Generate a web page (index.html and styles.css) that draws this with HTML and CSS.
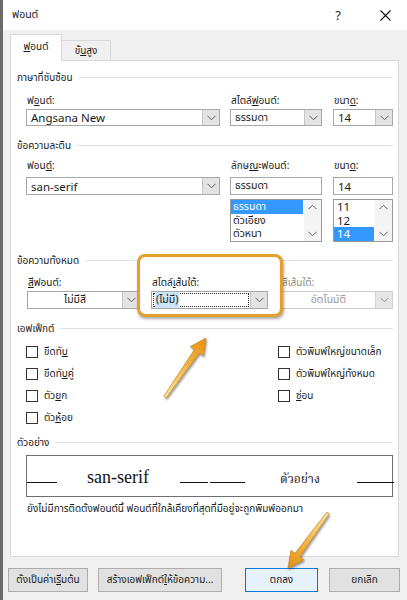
FILE: index.html
```html
<!DOCTYPE html>
<html lang="th">
<head>
<meta charset="utf-8">
<title>ฟอนต์</title>
<link rel="stylesheet" href="styles.css">
</head>
<body>
<div class="dialog">
  <header class="titlebar">
    <span class="title">ฟอนต์</span>
    <span class="help">?</span>
    <span class="close"><svg width="11" height="11" viewBox="0 0 11 11"><path d="M0.5 0.5L10.5 10.5M10.5 0.5L0.5 10.5" stroke="#111" stroke-width="1.1" fill="none"/></svg></span>
  </header>

  <nav class="tabs">
    <div class="tab tab-active"><u>ฟ</u>อนต์</div>
    <div class="tab tab-idle">ขั้<u>น</u>สูง</div>
  </nav>

  <main class="panel">
    <div class="group-head head-1"><span>ภาษาที่ซับซ้อน</span><i class="rule"></i></div>
    <div class="row">
      <div class="field w-font">
        <div class="label l-1">ฟ<u>อ</u>นต์:</div>
        <div class="combo c-1"><span class="combo-text">Angsana New</span><span class="combo-btn"><svg width="9" height="6" viewBox="0 0 9 6"><path d="M0.5 0.8L4.5 4.8L8.5 0.8" stroke="#606060" fill="none"/></svg></span></div>
      </div>
      <div class="field w-style">
        <div class="label l-1">สไตล์<u>ฟ</u>อนต์:</div>
        <div class="combo c-1"><span class="combo-text thai">ธรรมดา</span><span class="combo-btn"><svg width="9" height="6" viewBox="0 0 9 6"><path d="M0.5 0.8L4.5 4.8L8.5 0.8" stroke="#606060" fill="none"/></svg></span></div>
      </div>
      <div class="field w-size">
        <div class="label l-1">ขนา<u>ด</u>:</div>
        <div class="combo c-1"><span class="combo-text">14</span><span class="combo-btn"><svg width="9" height="6" viewBox="0 0 9 6"><path d="M0.5 0.8L4.5 4.8L8.5 0.8" stroke="#606060" fill="none"/></svg></span></div>
      </div>
    </div>

    <div class="group-head head-2"><span>ข้อความละติน</span><i class="rule"></i></div>
    <div class="row">
      <div class="field w-font">
        <div class="label l-2">ฟอน<u>ต์</u>:</div>
        <div class="combo c-2"><span class="combo-text">san-serif</span><span class="combo-btn"><svg width="9" height="6" viewBox="0 0 9 6"><path d="M0.5 0.8L4.5 4.8L8.5 0.8" stroke="#606060" fill="none"/></svg></span></div>
      </div>
      <div class="field w-style">
        <div class="label l-2">ลักษ<u>ณ</u>ะฟอนต์:</div>
        <div class="textbox c-2"><span class="combo-text thai">ธรรมดา</span></div>
        <div class="listbox">
          <ul class="items">
            <li class="sel">ธรรมดา</li>
            <li>ตัวเอียง</li>
            <li>ตัวหนา</li>
          </ul>
          <div class="vscroll">
            <svg width="9" height="6" viewBox="0 0 9 6"><path d="M0.5 5.2L4.5 1.2L8.5 5.2" stroke="#606060" fill="none"/></svg>
            <svg width="9" height="6" viewBox="0 0 9 6"><path d="M0.5 0.8L4.5 4.8L8.5 0.8" stroke="#606060" fill="none"/></svg>
          </div>
        </div>
      </div>
      <div class="field w-size">
        <div class="label l-2">ขนา<u>ด</u>:</div>
        <div class="textbox c-2"><span class="combo-text">14</span></div>
        <div class="listbox">
          <ul class="items items-num">
            <li>11</li>
            <li>12</li>
            <li class="sel">14</li>
          </ul>
          <div class="vscroll">
            <svg width="9" height="6" viewBox="0 0 9 6"><path d="M0.5 5.2L4.5 1.2L8.5 5.2" stroke="#606060" fill="none"/></svg>
            <svg width="9" height="6" viewBox="0 0 9 6"><path d="M0.5 0.8L4.5 4.8L8.5 0.8" stroke="#606060" fill="none"/></svg>
          </div>
        </div>
      </div>
    </div>

    <div class="group-head head-3"><span>ข้อความทั้งหมด</span><i class="rule"></i></div>
    <div class="row row-3">
      <div class="field w-color">
        <div class="label l-3"><u>สี</u>ฟอนต์:</div>
        <div class="combo c-3"><span class="combo-text centered">ไม่มีสี</span><span class="combo-btn"><svg width="9" height="6" viewBox="0 0 9 6"><path d="M0.5 0.8L4.5 4.8L8.5 0.8" stroke="#606060" fill="none"/></svg></span></div>
      </div>
      <div class="field w-uline">
        <div class="highlight"></div>
        <div class="label l-3">สไตล์<u>เ</u>ส้นใต้:</div>
        <div class="combo c-3"><span class="combo-text focus-text"><span class="selected"><span class="sel-word">(ไม่มี)</span></span></span><span class="combo-btn"><svg width="9" height="6" viewBox="0 0 9 6"><path d="M0.5 0.8L4.5 4.8L8.5 0.8" stroke="#606060" fill="none"/></svg></span></div>
      </div>
      <div class="field w-ucolor">
        <div class="label l-3 disabled">สีเส้นใต้:</div>
        <div class="combo c-3 combo-disabled"><span class="combo-text centered">อัตโนมัติ</span><span class="combo-btn"><svg width="9" height="6" viewBox="0 0 9 6"><path d="M0.5 0.8L4.5 4.8L8.5 0.8" stroke="#8a8a8a" fill="none"/></svg></span></div>
      </div>
    </div>

    <div class="group-head head-4"><span>เอฟเฟ็กต์</span><i class="rule"></i></div>
    <div class="checks">
      <label class="check"><span class="box"></span><span>ขีดทั<u>บ</u></span></label>
      <label class="check"><span class="box"></span><span>ตัวพิมพ์ใหญ่ขนาดเล็ก</span></label>
      <label class="check"><span class="box"></span><span>ขีดทั<u>บ</u>คู่</span></label>
      <label class="check"><span class="box"></span><span>ตัวพิมพ์ใหญ่ทั้งหมด</span></label>
      <label class="check"><span class="box"></span><span>ตัว<u>ย</u>ก</span></label>
      <label class="check"><span class="box"></span><span><u>ซ่</u>อน</span></label>
      <label class="check"><span class="box"></span><span>ตัว<u>ห้</u>อย</span></label>
    </div>

    <div class="group-head head-5"><span>ตัวอย่าง</span><i class="rule"></i></div>
    <div class="preview">
      <span class="uline ul-a"></span>
      <span class="pv-latin">san-serif</span>
      <span class="uline ul-b"></span>
      <span class="uline ul-c"></span>
      <span class="pv-thai">ตัวอย่าง</span>
      <span class="uline ul-d"></span>
    </div>
    <p class="note">ยังไม่มีการติดตั้งฟอนต์นี้ ฟอนต์ที่ใกล้เคียงที่สุดที่มีอยู่จะถูกพิมพ์ออกมา</p>
  </main>

  <footer class="buttons">
    <button class="btn b-default">ตั้งเป็นค่าเ<u>ริ่</u>มต้น</button>
    <button class="btn b-effects">สร้างเอฟเฟ็กต์<u>ใ</u>ห้ข้อความ...</button>
    <button class="btn b-ok">ตกลง</button>
    <button class="btn b-cancel">ยกเลิก</button>
  </footer>

  <svg class="callouts" width="407" height="600" viewBox="0 0 407 600">
    <defs>
      <linearGradient id="g1" x1="165" y1="397" x2="206" y2="338" gradientUnits="userSpaceOnUse">
        <stop offset="0" stop-color="#fbe3a0"/>
        <stop offset="0.6" stop-color="#f0b040"/>
        <stop offset="1" stop-color="#e8910f"/>
      </linearGradient>
      <linearGradient id="g2" x1="328" y1="513" x2="288" y2="568" gradientUnits="userSpaceOnUse">
        <stop offset="0" stop-color="#fbe3a0"/>
        <stop offset="0.6" stop-color="#f0b040"/>
        <stop offset="1" stop-color="#e8910f"/>
      </linearGradient>
      <filter id="sh" x="-30%" y="-30%" width="160%" height="160%">
        <feDropShadow dx="1" dy="1.5" stdDeviation="1.2" flood-color="#000" flood-opacity="0.45"/>
      </filter>
    </defs>
    <polygon filter="url(#sh)" fill="url(#g1)" stroke="#c07810" stroke-width="0.6"
      points="206,338 203.4,355.7 199.4,352.9 166.2,397.9 163.8,396.1 194.4,349.5 190.3,346.6"/>
    <polygon filter="url(#sh)" fill="url(#g2)" stroke="#c07810" stroke-width="0.6"
      points="288,568 303.9,559.8 299.8,556.9 329.2,513.9 326.8,512.1 295,553.3 290.9,550.4"/>
  </svg>
</div>
</body>
</html>
```

FILE: styles.css
```css
* { box-sizing: border-box; }

html, body {
  margin: 0;
  padding: 0;
}

body {
  width: 407px;
  height: 600px;
  overflow: hidden;
  background: #f0f0f0;
  font-family: "Noto Sans", "Noto Sans Thai", Tahoma, "DejaVu Sans", sans-serif;
  font-size: 10px;
  color: #1a1a1a;
}

.dialog {
  position: relative;
  width: 407px;
  height: 600px;
  border-left: 3px solid #6a6a6a;
  background: #f0f0f0;
}

u { text-decoration: underline; text-underline-offset: 1px; }

/* title bar */
.titlebar {
  height: 30px;
  background: #fff;
  display: flex;
  align-items: center;
  padding-left: 9px;
}
.title { font-size: 10.5px; flex: 1; }
.help { width: 12px; font-size: 13px; margin-right: 36px; text-align: center; }
.close { width: 11px; height: 11px; margin-right: 16px; display: flex; }

/* tabs */
.tabs {
  height: 30px;
  display: flex;
  align-items: flex-end;
  padding-left: 7px;
}
.tab {
  display: flex;
  align-items: center;
  justify-content: center;
  border: 1px solid #d9d9d9;
  border-bottom: none;
}
.tab-active {
  width: 52px;
  height: 27px;
  margin-bottom: -1px;
  background: #fff;
  position: relative;
  z-index: 1;
  padding-bottom: 2px;
}
.tab-idle {
  width: 49px;
  height: 20px;
  border-left: none;
  background: #f0f0f0;
}

/* panel */
.panel {
  margin-left: 7px;
  width: 389px;
  height: 497px;
  background: #fff;
  border: 1px solid #d9d9d9;
  display: flex;
  flex-direction: column;
}

.group-head {
  height: 14px;
  display: flex;
  align-items: center;
  padding-left: 6px;
  margin-right: 5px;
  line-height: 14px;
}
.group-head .rule {
  flex: 1;
  height: 1px;
  background: #dde3e8;
  margin-left: 6px;
}
.head-1 { margin-top: 9px; }
.head-2 { margin-top: 12px; }
.head-3 { margin-top: 11px; }
.head-4 { margin-top: 12px; }
.head-5 { margin-top: 6px; }

.row {
  display: flex;
  padding-left: 15px;
  gap: 10px;
}
.row .w-font { width: 194px; }
.row .w-style { width: 92px; }
.row .w-size { width: 60px; margin-left: 1px; }

.field { display: flex; flex-direction: column; }

.label { height: 14px; line-height: 14px; padding-left: 1px; white-space: nowrap; }
.l-1 { margin-top: 9px; margin-bottom: 2px; }
.l-2 { margin-top: 6px; margin-bottom: 5px; }
.l-3 { margin-top: 8px; margin-bottom: 2px; }
.disabled { color: #8d8d8d; }

.combo, .textbox {
  display: flex;
  align-items: stretch;
  border: 1px solid #a8a8a8;
  background: #fff;
}
.c-1 { height: 17px; }
.c-2 { height: 18px; }
.c-3 { height: 18px; }

.combo-text {
  flex: 1;
  display: flex;
  align-items: center;
  padding-left: 4px;
  font-size: 11.5px;
  white-space: nowrap;
  overflow: hidden;
}
.combo-text.thai { font-size: 10.5px; }
.combo-text.centered { justify-content: center; padding-left: 0; font-size: 10.5px; }
.combo-btn {
  width: 17px;
  background: #e3e3e3;
  border-left: 1px solid #c4c4c4;
  display: flex;
  align-items: center;
  justify-content: center;
}

.combo-disabled { border-color: #cfcfcf; }
.combo-disabled .combo-text { color: #9a9a9a; }
.combo-disabled .combo-btn { background: #e6e6e6; border-left-color: #d4d4d4; }

/* list boxes */
.listbox {
  margin-top: 4px;
  height: 43px;
  border: 1px solid #9a9a9a;
  display: flex;
  background: #fff;
}
.items {
  list-style: none;
  margin: 0;
  padding: 0;
  flex: 1;
}
.items li {
  height: 13.6px;
  line-height: 13.6px;
  padding-left: 2px;
  white-space: nowrap;
  font-size: 10.5px;
}
.items-num li { font-size: 11.5px; padding-left: 3px; }
.items li.sel { background: #3399ff; color: #fff; margin-right: 1px; }
.vscroll {
  width: 17px;
  background: #f4f4f4;
  display: flex;
  flex-direction: column;
  justify-content: space-between;
  align-items: center;
  padding: 4px 0;
}

/* row 3 */
.row-3 { padding-left: 16px; gap: 0; }
.w-color { width: 113px; }
.w-uline { width: 117px; margin-left: 11px; position: relative; z-index: 2; }
.w-ucolor { width: 112px; margin-left: 13px; }

.highlight {
  position: absolute;
  left: -14px;
  top: -13px;
  width: 146px;
  height: 63px;
  border: 3px solid #e4a02c;
  border-radius: 8px;
  background: #fff;
  box-shadow: 1px 2px 3px rgba(0,0,0,0.35), inset 0 0 1px rgba(120,70,0,0.4);
  z-index: -1;
}
.focus-text { padding: 1px; }
.focus-text .selected {
  flex: 1;
  height: 100%;
  display: flex;
  align-items: center;
  padding-left: 1px;
  border: 1px dotted #333;
}
.sel-word {
  background: #cde4f7;
  font-size: 10.5px;
  padding: 0 1px;
}

/* checkboxes */
.checks {
  margin-top: 6px;
  display: grid;
  grid-template-columns: 252px auto;
  grid-auto-rows: 22px;
  padding-left: 15px;
}
.check {
  display: flex;
  align-items: center;
  gap: 6px;
  white-space: nowrap;
}
.check .box {
  width: 12px;
  height: 12px;
  border: 1px solid #333;
  background: #fff;
}

/* preview */
.preview {
  margin-top: 6px;
  margin-left: 15px;
  width: 367px;
  height: 42px;
  border: 1px solid #6e6e6e;
  display: flex;
  align-items: baseline;
  padding-top: 10px;
  white-space: nowrap;
}
.preview > * { flex-shrink: 0; }
.uline { height: 1px; border-bottom: 1px solid #111; }
.ul-a { width: 30px; }
.pv-latin {
  margin-left: 30px;
  font-family: "Liberation Serif", "Times New Roman", serif;
  font-size: 18px;
  line-height: 22px;
  color: #111;
}
.ul-b { width: 28px; margin-left: 31px; }
.ul-c { width: 35px; margin-left: 2px; }
.pv-thai {
  margin-left: 35px;
  font-family: "Liberation Serif", "Noto Serif Thai", serif;
  font-size: 12px;
  color: #111;
}
.ul-d { width: 37px; margin-left: 37px; }

.note {
  margin: 4px 0 0 16px;
  height: 14px;
  line-height: 14px;
  white-space: nowrap;
}

/* buttons */
.buttons {
  display: flex;
  margin-top: 11px;
  padding-left: 5px;
}
.btn {
  height: 24px;
  padding: 0;
  border: 1px solid #adadad;
  background: #e1e1e1;
  font-family: inherit;
  font-size: 10px;
  color: #1a1a1a;
  white-space: nowrap;
}
.b-default { width: 80px; }
.b-effects { width: 124px; margin-left: 10px; }
.b-ok { width: 73px; margin-left: 23px; background: #e5f1fb; border-color: #0078d7; }
.b-cancel { width: 71px; margin-left: 11px; }

.callouts {
  position: absolute;
  left: -3px;
  top: 0;
  pointer-events: none;
  z-index: 10;
}
```
